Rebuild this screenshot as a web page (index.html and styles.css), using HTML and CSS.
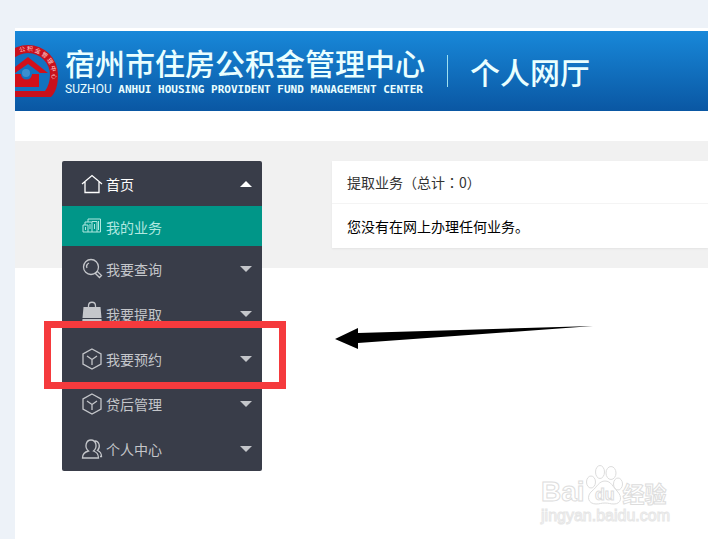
FILE: index.html
```html
<!DOCTYPE html>
<html lang="zh-CN">
<head>
    <meta charset="UTF-8">
    <meta name="viewport" content="width=device-width, initial-scale=1.0">
    <title>宿州市住房公积金管理中心 - 个人网厅</title>
    <link rel="stylesheet" href="styles.css">
</head>
<body>

<div class="page">
    <header class="header">
        <svg class="logo" viewBox="0 0 43 53" aria-hidden="true">
            <path d="M-17 52V30a30 30 0 0 1 60 0c0 9-2 17-7 22z" fill="#c9101c"/>
            <path d="M-9 46V30a22 22 0 0 1 44 0c0 6-2 12-5 16z" fill="#1272c0"/>
            <path d="M-8 28L13 12l20 16h-8L13 19 0 28z" fill="#d2101a"/>
            <path d="M-1 29h7a5 5 0 0 0 11 0h7v13H-1z" fill="#d2101a"/>
            <circle cx="11" cy="28" r="4" fill="#3b8fd0"/>
            <path id="ring" d="M-11 30a24 24 0 0 1 48 0c0 8-2 14-6 20" fill="none"/>
            <text class="logo-text"><textPath href="#ring" startOffset="29">公 积 金 管 理 中 心</textPath></text>
        </svg>
        <div class="brand">
            <h1 class="brand-name">宿州市住房公积金管理中心</h1>
            <p class="brand-en"><span class="brand-city">SUZHOU</span> ANHUI HOUSING PROVIDENT FUND MANAGEMENT CENTER</p>
        </div>
        <div class="site-name">个人网厅</div>
    </header>

    <div class="main">
        <nav class="menu">
            <a class="menu-item open" href="#">
                <svg class="icon" viewBox="0 0 20 20"><path d="M0 10L10 1.500l10 8.500M3 8v10.500h14V8"/></svg>
                <span class="menu-label">首页</span>
                <span class="caret up"></span>
            </a>
            <a class="menu-item active" href="#">
                <svg class="icon thin" viewBox="0 0 20 20"><path d="M6 6V3h12.500v13H1V9h5v7M3 9V6h7v10M10 5.500h5V16M8 8v5M12.500 8v5M16.500 5v9M3.500 11v3"/></svg>
                <span class="menu-label">我的业务</span>
            </a>
            <a class="menu-item" href="#">
                <svg class="icon" viewBox="0 0 20 20"><circle cx="9" cy="8" r="7.500"/><path d="M5 9c-1-2 0-4 2-5M14 13.500l1.500-1 4 4-2 2-4-4z"/></svg>
                <span class="menu-label">我要查询</span>
                <span class="caret"></span>
            </a>
            <a class="menu-item" href="#">
                <svg class="icon" viewBox="0 0 20 20"><path class="solid" d="M1.500 3h17l1 11H.500zM.500 15h19l.500 5H0z"/><path d="M6.500 5V2c0-5 7-5 7 0v3"/></svg>
                <span class="menu-label">我要提取</span>
                <span class="caret"></span>
            </a>
            <a class="menu-item" href="#">
                <svg class="icon" viewBox="0 0 20 20"><path d="M10 0l9 5v10l-9 5-9-5V5zM5 7l5 3.500L15 7M10 10.500V16"/></svg>
                <span class="menu-label">我要预约</span>
                <span class="caret"></span>
            </a>
            <a class="menu-item" href="#">
                <svg class="icon" viewBox="0 0 20 20"><path d="M10 0l9 5v10l-9 5-9-5V5zM5 7l5 3.500L15 7M10 10.500V16"/></svg>
                <span class="menu-label">贷后管理</span>
                <span class="caret"></span>
            </a>
            <a class="menu-item" href="#">
                <svg class="icon" viewBox="0 0 20 20"><path d="M6.500 12C2 8 4 1 9 1s7 7 2.500 11c3 1 5 3 5 7H.500c0-4 2-6 6-7zM13 2c4 0 6 6 2.500 9.500 2.500 1 4 3 4 6H18"/></svg>
                <span class="menu-label">个人中心</span>
                <span class="caret"></span>
            </a>
            <div class="highlight"></div>
        </nav>

        <section class="panel">
            <h2 class="panel-title">提取业务<span class="count" lang="zh-TW">（</span>总计<span class="count" lang="zh-TW">：0）</span></h2>
            <p class="panel-body">您没有在网上办理任何业务。</p>
        </section>
    </div>

    <svg class="pointer" viewBox="0 0 258 24" aria-hidden="true">
        <path d="M0 13L23 2v5L258 0 23 17v6z"/>
    </svg>

    <div class="watermark">
        <div class="watermark-logo">
            <span class="watermark-bai">Bai</span>
            <svg class="paw" viewBox="0 0 38 42" aria-hidden="true">
                <ellipse cx="6" cy="18" rx="4.500" ry="6"/>
                <ellipse cx="15" cy="8" rx="4.500" ry="6.500"/>
                <ellipse cx="26" cy="9" rx="5" ry="6.500"/>
                <ellipse cx="33" cy="20" rx="4.500" ry="6"/>
                <path d="M20 17c6 0 8 6 12 10 6 6 4 13-3 13-4 0-5-1-9-1s-5 1-9 1c-8 0-10-8-4-13 5-4 7-10 13-10z"/>
                <text x="10" y="36">du</text>
            </svg>
            <span class="watermark-cn">经验</span>
        </div>
        <div class="watermark-url">jingyan.baidu.com</div>
    </div>
</div>

</body>
</html>
```
FILE: styles.css
```css
* {
    box-sizing: border-box;
}
body {
    margin: 0;
    padding: 28px 0 0 15px;
    background-color: #edf2f8; /* Pale blue frame */
    font-family: "Noto Sans CJK SC", sans-serif;
    font-size: 14px;
    color: #222222;
}
h1, h2, p {
    margin: 0;
    font-weight: normal;
}
.page {
    position: relative;
    min-height: calc(100vh - 28px);
    padding-top: 3px;
    background-color: #ffffff;
}

/* Header */
.header {
    display: flex;
    align-items: center;
    height: 80px;
    overflow: hidden;
    background: linear-gradient(#1888d9, #0a57a3);
    color: #eaffff;
    white-space: nowrap;
}
.logo {
    flex: none;
    width: 43px;
    height: 53px;
    margin-right: 7px;
}
.logo-text {
    font-size: 6px;
    fill: #ffd0d0;
}
.brand-name {
    font-size: 30px;
    font-weight: 500;
    line-height: 36px;
}
.brand-en {
    font-family: "DejaVu Sans Mono", monospace;
    font-size: 11px;
    font-weight: bold;
    line-height: 18px;
}
.brand-city {
    font-family: Roboto, sans-serif;
    font-size: 12px;
    font-weight: normal;
}
.site-name {
    margin-left: 22px;
    padding-left: 22px;
    border-left: 1px solid #9fe0f0;
    font-size: 30px;
    font-weight: 500;
    line-height: 32px;
}

/* Content area */
.main {
    display: flex;
    align-items: flex-start;
    gap: 70px;
    height: 127px;
    margin-top: 30px;
    padding: 20px 0 0 47px;
    background-color: #f1f1f1;
}
.menu {
    position: relative;
    flex: none;
    width: 200px;
    border-radius: 2px;
    background-color: #393d49;
}
.menu-item {
    display: flex;
    align-items: center;
    height: 45px;
    padding: 0 10px 0 20px;
    color: #c4c6ca;
    text-decoration: none;
}
.menu-item.open {
    color: #ffffff;
}
.menu-item.active {
    height: 40px;
    background-color: #009688;
    color: #b0e8e0;
}
.menu-label {
    flex: 1;
    margin-left: 4px;
    padding-top: 1px;
    line-height: 20px;
}
.icon {
    width: 20px;
    height: 20px;
    overflow: visible;
    fill: none;
    stroke: currentColor;
    stroke-width: 1.3;
}
.icon.thin {
    stroke-width: 1;
}
.icon .solid {
    fill: currentColor;
    stroke: none;
}
.caret {
    border: 6px solid transparent;
    border-top-color: currentColor;
    border-bottom: none;
}
.caret.up {
    border-top: none;
    border-bottom: 6px solid currentColor;
}
.highlight {
    position: absolute;
    top: 160px;
    left: -18px;
    right: -24px;
    height: 68px;
    border: 7px solid #f53a3d; /* Red marker frame */
    pointer-events: none;
}
.panel {
    flex: 1;
    background-color: #ffffff;
    box-shadow: 0 1px 2px rgba(0, 0, 0, 0.06);
}
.panel-title {
    padding: 0 15px;
    border-bottom: 1px solid #f4f4f4;
    font-size: 14px;
    line-height: 42px;
    color: #333333;
}
.count {
    font-family: "Noto Sans CJK TC", sans-serif;
}
.panel-body {
    padding: 0 15px;
    line-height: 44px;
    color: #000000;
}

/* Arrow and watermark lie over the page */
.pointer {
    position: absolute;
    top: 298px;
    left: 320px;
    width: 258px;
    height: 24px;
}
.watermark {
    position: absolute;
    right: 38px;
    bottom: 13px;
    color: #ffffff;
    -webkit-text-stroke: 1px #dddddd;
}
.watermark-logo {
    display: flex;
    align-items: flex-end;
    font-weight: bold;
    line-height: 28px;
}
.watermark-bai {
    font-family: "Liberation Sans", sans-serif;
    font-size: 28px;
}
.watermark-cn {
    font-size: 22px;
}
.paw {
    width: 38px;
    height: 42px;
    fill: #ffffff;
    stroke: #dddddd;
}
.paw text {
    font-family: "Liberation Sans", sans-serif;
    font-size: 16px;
}
.watermark-url {
    font-family: "Liberation Sans", sans-serif;
    font-size: 16px;
    line-height: 20px;
    text-align: right;
    -webkit-text-stroke: 1px #e6e6e6;
}
```
